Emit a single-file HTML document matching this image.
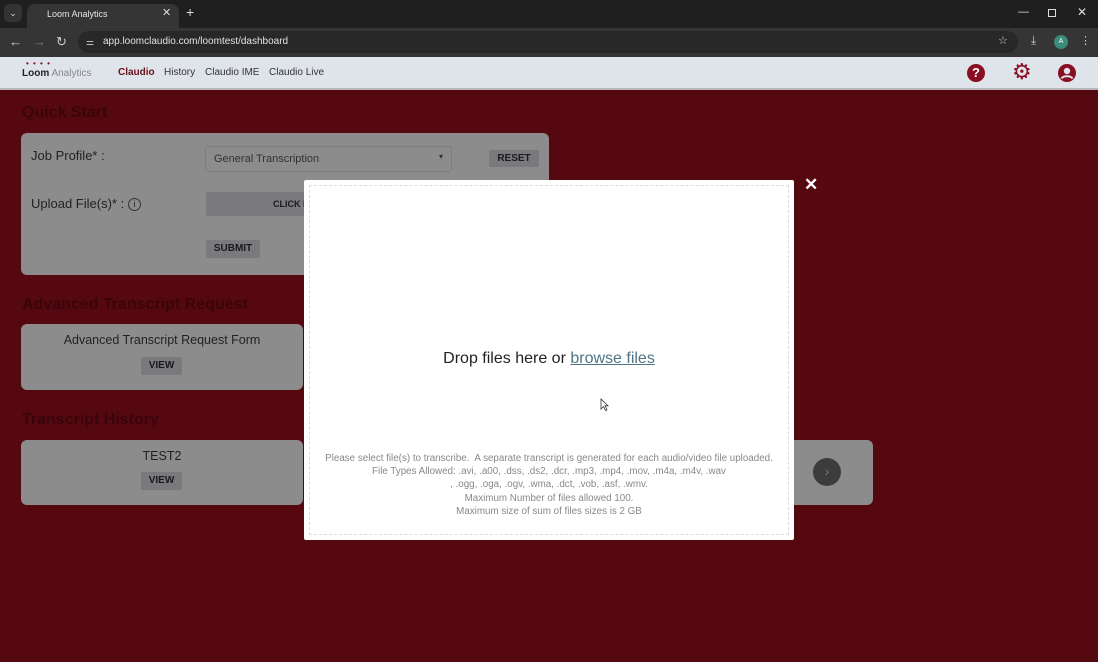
<!DOCTYPE html>
<html><head><meta charset="utf-8"><style>
*{box-sizing:border-box;margin:0;padding:0}
body{width:1098px;height:662px;overflow:hidden;background:#560811;font-family:"Liberation Sans",Arial,sans-serif;position:relative}
.abs{position:absolute}
.card{position:absolute;background:#8c8c8c;border-radius:6px}
.btn{position:absolute;background:#7a7a7e;color:#1a1a1a;font-size:10px;font-weight:bold;text-align:center;border-radius:2px}
.h{position:absolute;color:#3a050a;font-size:16px;font-weight:bold}
.lbl{position:absolute;color:#222;font-size:13px}
</style></head><body>
<div class="abs" style="left:0;top:0;width:1098px;height:28px;background:#1f1f1f"></div>
<div class="abs" style="left:4px;top:4px;width:18px;height:18px;background:#333;border-radius:5px;color:#ddd;font-size:9px;text-align:center;line-height:18px">&#8964;</div>
<div class="abs" style="left:27px;top:4px;width:152px;height:24px;background:#353535;border-radius:8px 8px 0 0"></div>
<div class="abs" style="left:47px;top:9px;color:#e6e6e6;font-size:9px">Loom Analytics</div>
<div class="abs" style="left:162px;top:6px;color:#ddd;font-size:11px">✕</div>
<div class="abs" style="left:186px;top:4px;color:#ddd;font-size:14px">+</div>
<div class="abs" style="left:1018px;top:6px;color:#ddd;font-size:11px">—</div>
<div class="abs" style="left:1048px;top:9px;width:8px;height:8px;border:1px solid #ddd"></div>
<div class="abs" style="left:1077px;top:5px;color:#ddd;font-size:12px">✕</div>
<div class="abs" style="left:0;top:28px;width:1098px;height:29px;background:#353535"></div>
<div class="abs" style="left:9px;top:34px;color:#ccc;font-size:13px">←</div>
<div class="abs" style="left:33px;top:34px;color:#777;font-size:13px">→</div>
<div class="abs" style="left:56px;top:34px;color:#ccc;font-size:13px">↻</div>
<div class="abs" style="left:78px;top:31px;height:22px;background:#282828;border-radius:11px;width:940px"></div>
<div class="abs" style="left:86px;top:37px;width:10px;height:10px;color:#ccc;font-size:9px;line-height:10px">⚌</div>
<div class="abs" style="left:103px;top:36px;color:#e3e3e3;font-size:10px">app.loomclaudio.com/loomtest/dashboard</div>
<div class="abs" style="left:1054px;top:35px;width:14px;height:14px;border-radius:50%;background:#3b8a7a;color:#fff;font-size:7px;text-align:center;line-height:14px">A</div>
<div class="abs" style="left:998px;top:34px;color:#ccc;font-size:11px">☆</div>
<div class="abs" style="left:1031px;top:33px;color:#ccc;font-size:12px">⤓</div>
<div class="abs" style="left:1080px;top:34px;color:#ccc;font-size:11px">⋮</div>
<div class="abs" style="left:0;top:57px;width:1098px;height:31px;background:#dfe3ea"></div>
<div class="abs" style="left:0;top:88px;width:1098px;height:2px;background:#b8b8bc"></div>
<div class="abs" style="left:26px;top:59px;color:#7a1020;font-size:8px;letter-spacing:1px">• • • •</div>
<div class="abs" style="left:22px;top:68px;font-size:10px;color:#222"><b>Loom</b> <span style="color:#888">Analytics</span></div>
<div class="abs" style="left:118px;top:67px;font-size:10px;color:#6a0f1e;font-weight:bold">Claudio</div>
<div class="abs" style="left:164px;top:67px;font-size:10px;color:#333">History</div>
<div class="abs" style="left:205px;top:67px;font-size:10px;color:#333">Claudio IME</div>
<div class="abs" style="left:269px;top:67px;font-size:10px;color:#333">Claudio Live</div>
<div class="abs" style="left:967px;top:64px;width:18px;height:18px;border-radius:50%;background:#8a0e22;color:#fff;font-weight:bold;font-size:13px;text-align:center;line-height:18px">?</div>
<div class="abs" style="left:1012px;top:61px;color:#8a0e22;font-size:22px;line-height:22px">⚙</div>
<svg class="abs" style="left:1058px;top:64px" width="18" height="18" viewBox="0 0 18 18"><circle cx="9" cy="9" r="9" fill="#8a0e22"/><circle cx="9" cy="7" r="3.2" fill="#dfe3ea"/><path d="M3.5 14.5c1.5-3 9.5-3 11 0" stroke="#dfe3ea" stroke-width="2" fill="none"/></svg>
<div class="h" style="left:22px;top:104px">Quick Start</div>
<div class="card" style="left:21px;top:133px;width:528px;height:142px"></div>
<div class="lbl" style="left:31px;top:148px">Job Profile* :</div>
<div class="abs" style="left:205px;top:146px;width:247px;height:26px;border:1px solid #7d7d7d;border-radius:3px;color:#333;font-size:11px;padding:6px 8px">General Transcription<span style="position:absolute;right:8px;top:5px;font-size:8px">▾</span></div>
<div class="btn" style="left:489px;top:150px;width:50px;height:17px;line-height:17px">RESET</div>
<div class="lbl" style="left:31px;top:196px">Upload File(s)* : <span style="display:inline-block;width:13px;height:13px;border:1px solid #333;border-radius:50%;font-size:9px;text-align:center;line-height:11px;vertical-align:middle">i</span></div>
<div class="btn" style="left:206px;top:192px;width:200px;height:24px;line-height:24px;padding-left:67px;text-align:left;font-size:9px">CLICK HERE</div>
<div class="btn" style="left:206px;top:240px;width:54px;height:18px;line-height:18px">SUBMIT</div>
<div class="h" style="left:22px;top:296px">Advanced Transcript Request</div>
<div class="card" style="left:21px;top:324px;width:282px;height:66px"></div>
<div class="abs" style="left:21px;top:333px;width:282px;text-align:center;font-size:12.5px;color:#222">Advanced Transcript Request Form</div>
<div class="btn" style="left:141px;top:357px;width:41px;height:18px;line-height:18px">VIEW</div>
<div class="h" style="left:22px;top:411px">Transcript History</div>
<div class="card" style="left:21px;top:440px;width:282px;height:65px"></div>
<div class="abs" style="left:21px;top:449px;width:282px;text-align:center;font-size:12.5px;color:#222">TEST2</div>
<div class="btn" style="left:141px;top:472px;width:41px;height:18px;line-height:18px">VIEW</div>
<div class="card" style="left:760px;top:440px;width:113px;height:65px"></div>
<div class="abs" style="left:813px;top:458px;width:28px;height:28px;border-radius:50%;background:#3c3c3c;color:#777;font-size:14px;text-align:center;line-height:27px">›</div>
<div class="abs" style="left:304px;top:180px;width:490px;height:360px;background:#fff;border-radius:2px"></div>
<div class="abs" style="left:309px;top:185px;width:480px;height:350px;border:1px dashed #dcdcdc"></div>
<div class="abs" style="left:804px;top:175px;color:#fff;font-size:17px;font-weight:bold">✕</div>
<div class="abs" style="left:304px;top:350px;width:490px;text-align:center;font-size:16px;color:#222">Drop files here or <span style="color:#4f7387;text-decoration:underline">browse files</span></div>
<div class="abs" style="left:304px;top:452px;width:490px;text-align:center;font-size:9.8px;line-height:13.2px;color:#888">Please select file(s) to transcribe.&nbsp; A separate transcript is generated for each audio/video file uploaded.<br>File Types Allowed: .avi, .a00, .dss, .ds2, .dcr, .mp3, .mp4, .mov, .m4a, .m4v, .wav<br>, .ogg, .oga, .ogv, .wma, .dct, .vob, .asf, .wmv.<br>Maximum Number of files allowed 100.<br>Maximum size of sum of files sizes is 2 GB</div>
<svg class="abs" style="left:600px;top:398px" width="10" height="14" viewBox="0 0 10 14"><path d="M1 1v10l2.5-2.5 2 4 1.5-.7-2-4H8z" fill="#fff" stroke="#333" stroke-width="0.8"/></svg>
</body></html>
